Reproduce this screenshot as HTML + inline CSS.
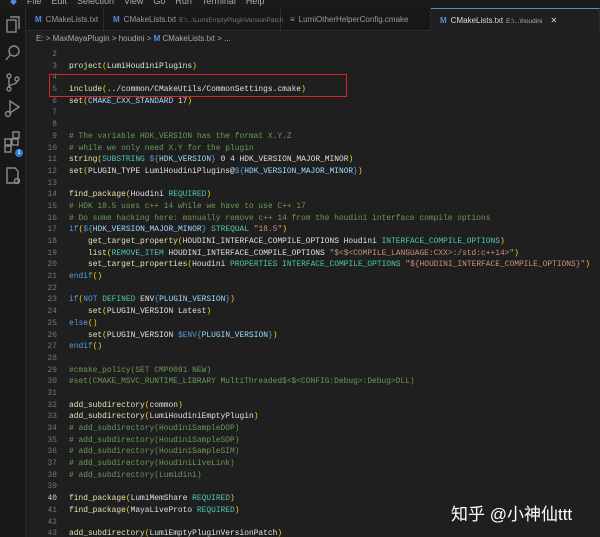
<!DOCTYPE html>
<html><head><meta charset="utf-8"><style>
*{margin:0;padding:0;box-sizing:border-box}
html,body{width:600px;height:537px;overflow:hidden}
body{background:#1f1f1f;font-family:"Liberation Sans",sans-serif;position:relative}
.menu{position:absolute;left:0;top:0;width:600px;height:8px;background:#1b1b1b;color:#aaa;font-size:9px;line-height:2px;overflow:hidden}
.menu span{margin-left:10px}
.act{position:absolute;left:0;top:8px;width:26px;height:529px;background:#181818;border-right:1px solid #2a2a2a}
.tabs{position:absolute;left:26px;top:8px;width:574px;height:23px;background:#181818;border-bottom:1px solid #2b2b2b}
.tab{position:absolute;top:0;height:23px;font-size:8px;color:#9a9a9a;line-height:23px;padding-left:9px;border-right:1px solid #2b2b2b;white-space:nowrap}
.tab b{color:#4f8fd8;font-weight:bold;margin-right:4px}
.tab i{font-style:normal;font-size:6.5px;color:#777;margin-left:3px}
.bc{position:absolute;left:26px;top:31px;height:15px;font-size:8px;color:#aaa;line-height:15px;padding-left:10px}
.bc b{color:#4f8fd8}
.code{position:absolute;left:26px;top:49px;font-family:"Liberation Mono",monospace;font-size:7.9px;line-height:11.7px}
.l{height:11.7px;white-space:pre}
.ln{position:absolute;left:0;top:0;width:31px}
.ln .l{text-align:right;color:#6e7681}
.tx{position:absolute;left:43px;top:0;color:#e0e0e0;width:540px}
.f{color:#e4e4b0}.p{color:#ffd700}.k{color:#569cd6}.t{color:#4ec9b0}.c{color:#6a9955}.s{color:#ce9178}.v{color:#9cdcfe}
.box{position:absolute;left:49px;top:74px;width:298px;height:23px;border:1.5px solid #d9262e}
.wm{position:absolute;left:451px;top:500px;color:#fff;font-family:"Liberation Sans","Noto Sans CJK SC",sans-serif;font-size:17px}
</style></head><body>
<div class="menu"><span style="color:#4f8fd8">◆</span><span>File</span><span>Edit</span><span>Selection</span><span>View</span><span>Go</span><span>Run</span><span>Terminal</span><span>Help</span></div>
<div class="act">
<svg width="26" height="200" style="position:absolute;left:0;top:0" fill="none" stroke="#8a8a8a" stroke-width="1.4">
<rect x="7" y="12" width="9" height="12"/><path d="M10 9h9v12"/>
<circle cx="14" cy="43" r="5"/><path d="M10 47l-4 5"/>
<circle cx="9" cy="68" r="2"/><circle cx="9" cy="81" r="2"/><circle cx="17" cy="71" r="2"/><path d="M9 70v9M17 73c0 4-8 3-8 6"/>
<path d="M10 93l9 6-9 6z"/><circle cx="8" cy="106" r="2.5"/>
<rect x="5" y="131" width="6" height="6"/><rect x="12" y="131" width="6" height="6"/><rect x="5" y="138" width="6" height="6"/><rect x="13" y="124" width="6" height="6"/>
<path d="M7 160h8l3 3v12H7z"/><circle cx="17" cy="173" r="2.5"/>
</svg>
<div style="position:absolute;left:15px;top:141px;width:8px;height:8px;border-radius:50%;background:#2f7fd8;color:#fff;font-size:6px;text-align:center;line-height:8px">1</div>
</div>
<div class="tabs">
<div class="tab" style="left:0;width:78px"><b>M</b>CMakeLists.txt</div>
<div class="tab" style="left:78px;width:177px"><b>M</b>CMakeLists.txt<i>E:\...\LumiEmptyPluginVersionPatch</i></div>
<div class="tab" style="left:255px;width:150px"><b style="color:#9a9a9a">≡</b>LumiOtherHelperConfig.cmake</div>
<div class="tab" style="left:405px;width:169px;background:#1f1f1f;color:#ddd;border-top:1px solid #4f8fd8"><b>M</b>CMakeLists.txt<i style="color:#aaa">E:\...\houdini</i> <span style="margin-left:6px">✕</span></div>
</div>
<div class="bc">E: &gt; MaxMayaPlugin &gt; houdini &gt; <b>M</b> CMakeLists.txt &gt; ...</div>
<div class="code">
<div class="ln"><div class="l">2</div><div class="l">3</div><div class="l">4</div><div class="l">5</div><div class="l">6</div><div class="l">7</div><div class="l">8</div><div class="l">9</div><div class="l">10</div><div class="l">11</div><div class="l">12</div><div class="l">13</div><div class="l">14</div><div class="l">15</div><div class="l">16</div><div class="l">17</div><div class="l">18</div><div class="l">19</div><div class="l">20</div><div class="l">21</div><div class="l">22</div><div class="l">23</div><div class="l">24</div><div class="l">25</div><div class="l">26</div><div class="l">27</div><div class="l">28</div><div class="l">29</div><div class="l">30</div><div class="l">31</div><div class="l">32</div><div class="l">33</div><div class="l">34</div><div class="l">35</div><div class="l">36</div><div class="l">37</div><div class="l">38</div><div class="l">39</div><div class="l" style="color:#ccc">40</div><div class="l">41</div><div class="l">42</div><div class="l">43</div></div>
<div class="tx">
<div class="l"></div>
<div class="l"><span class="f">project</span><span class="p">(</span>LumiHoudiniPlugins<span class="p">)</span></div>
<div class="l"></div>
<div class="l"><span class="f">include</span><span class="p">(</span>../common/CMakeUtils/CommonSettings.cmake<span class="p">)</span></div>
<div class="l"><span class="f">set</span><span class="p">(</span><span class="v">CMAKE_CXX_STANDARD</span> 17<span class="p">)</span></div>
<div class="l"></div>
<div class="l"></div>
<div class="l"><span class="c"># The variable HDK_VERSION has the format X.Y.Z</span></div>
<div class="l"><span class="c"># while we only need X.Y for the plugin</span></div>
<div class="l"><span class="f">string</span><span class="p">(</span><span class="t">SUBSTRING</span> <span class="k">${</span><span class="v">HDK_VERSION</span><span class="k">}</span> 0 4 HDK_VERSION_MAJOR_MINOR<span class="p">)</span></div>
<div class="l"><span class="f">set</span><span class="p">(</span>PLUGIN_TYPE LumiHoudiniPlugins@<span class="k">${</span><span class="v">HDK_VERSION_MAJOR_MINOR</span><span class="k">}</span><span class="p">)</span></div>
<div class="l"></div>
<div class="l"><span class="f">find_package</span><span class="p">(</span>Houdini <span class="t">REQUIRED</span><span class="p">)</span></div>
<div class="l"><span class="c"># HDK 18.5 uses c++ 14 while we have to use C++ 17</span></div>
<div class="l"><span class="c"># Do some hacking here: manually remove c++ 14 from the houdini interface compile options</span></div>
<div class="l"><span class="k">if</span><span class="p">(</span><span class="k">${</span><span class="v">HDK_VERSION_MAJOR_MINOR</span><span class="k">}</span> <span class="t">STREQUAL</span> <span class="s">"18.5"</span><span class="p">)</span></div>
<div class="l">    <span class="f">get_target_property</span><span class="p">(</span>HOUDINI_INTERFACE_COMPILE_OPTIONS Houdini <span class="t">INTERFACE_COMPILE_OPTIONS</span><span class="p">)</span></div>
<div class="l">    <span class="f">list</span><span class="p">(</span><span class="t">REMOVE_ITEM</span> HOUDINI_INTERFACE_COMPILE_OPTIONS <span class="s">"$&lt;$&lt;COMPILE_LANGUAGE:CXX&gt;:/std:c++14&gt;"</span><span class="p">)</span></div>
<div class="l">    <span class="f">set_target_properties</span><span class="p">(</span>Houdini <span class="t">PROPERTIES</span> <span class="t">INTERFACE_COMPILE_OPTIONS</span> <span class="s">"${HOUDINI_INTERFACE_COMPILE_OPTIONS}"</span><span class="p">)</span></div>
<div class="l"><span class="k">endif</span><span class="p">()</span></div>
<div class="l"></div>
<div class="l"><span class="k">if</span><span class="p">(</span><span class="k">NOT</span> <span class="t">DEFINED</span> ENV<span class="k">{</span><span class="v">PLUGIN_VERSION</span><span class="k">}</span><span class="p">)</span></div>
<div class="l">    <span class="f">set</span><span class="p">(</span>PLUGIN_VERSION Latest<span class="p">)</span></div>
<div class="l"><span class="k">else</span><span class="p">()</span></div>
<div class="l">    <span class="f">set</span><span class="p">(</span>PLUGIN_VERSION <span class="k">$ENV{</span><span class="v">PLUGIN_VERSION</span><span class="k">}</span><span class="p">)</span></div>
<div class="l"><span class="k">endif</span><span class="p">()</span></div>
<div class="l"></div>
<div class="l"><span class="c">#cmake_policy(SET CMP0091 NEW)</span></div>
<div class="l"><span class="c">#set(CMAKE_MSVC_RUNTIME_LIBRARY MultiThreaded$&lt;$&lt;CONFIG:Debug&gt;:Debug&gt;DLL)</span></div>
<div class="l"></div>
<div class="l"><span class="f">add_subdirectory</span><span class="p">(</span>common<span class="p">)</span></div>
<div class="l"><span class="f">add_subdirectory</span><span class="p">(</span>LumiHoudiniEmptyPlugin<span class="p">)</span></div>
<div class="l"><span class="c"># add_subdirectory(HoudiniSampleDOP)</span></div>
<div class="l"><span class="c"># add_subdirectory(HoudiniSampleSOP)</span></div>
<div class="l"><span class="c"># add_subdirectory(HoudiniSampleSIM)</span></div>
<div class="l"><span class="c"># add_subdirectory(HoudiniLiveLink)</span></div>
<div class="l"><span class="c"># add_subdirectory(Lumidini)</span></div>
<div class="l"></div>
<div class="l"><span class="f">find_package</span><span class="p">(</span>LumiMemShare <span class="t">REQUIRED</span><span class="p">)</span></div>
<div class="l"><span class="f">find_package</span><span class="p">(</span>MayaLiveProto <span class="t">REQUIRED</span><span class="p">)</span></div>
<div class="l"></div>
<div class="l"><span class="f">add_subdirectory</span><span class="p">(</span>LumiEmptyPluginVersionPatch<span class="p">)</span></div>
</div>
</div>
<div class="box"></div>
<div class="wm">知乎 @小神仙ttt</div>
</body></html>
